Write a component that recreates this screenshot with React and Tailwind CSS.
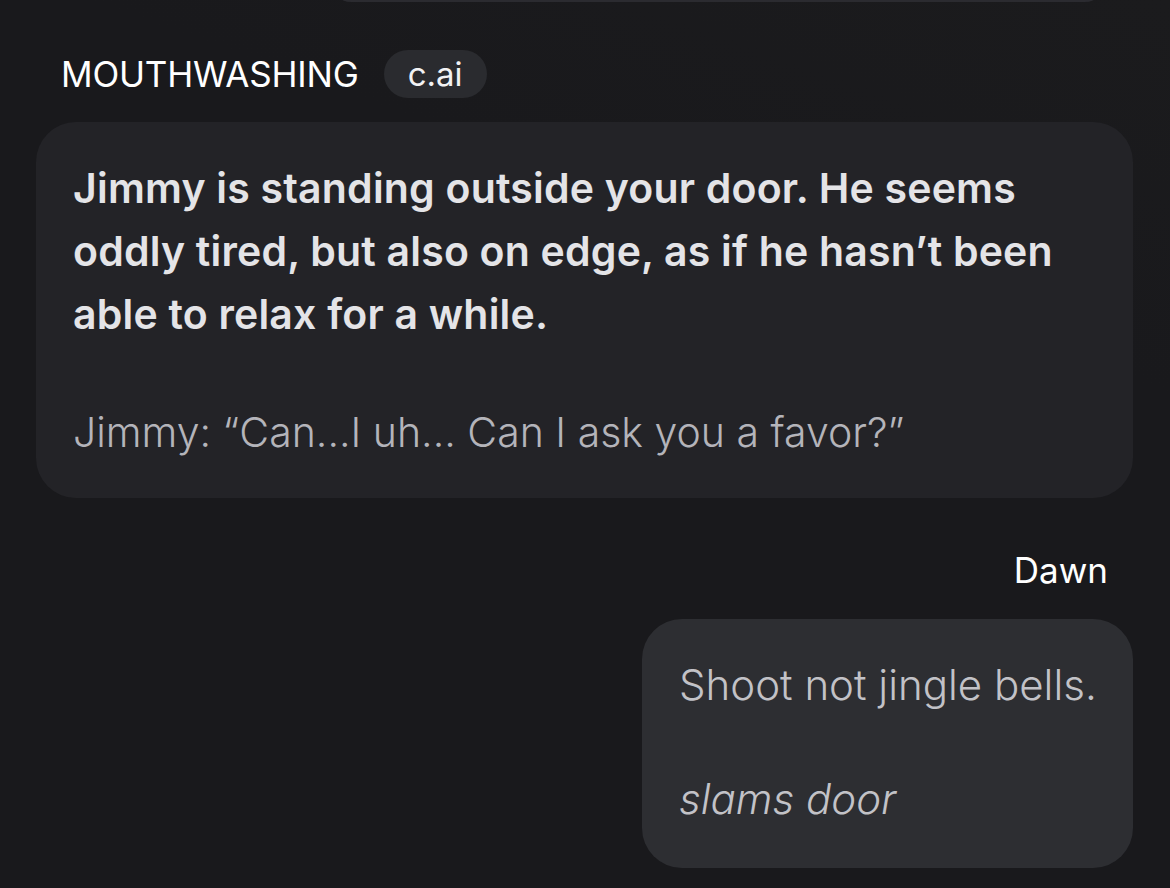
export default function App() {
  return (
    <div
      className="w-[1170px] h-[888px] overflow-hidden bg-[#19191c] text-white relative"
      style={{ fontFamily: 'Inter, "Noto Sans", sans-serif' }}
    >
      <div className="absolute inset-0 pointer-events-none bg-[linear-gradient(200deg,#1b1b1d_0%,#19191c_30%,#19191c_100%)]" />
      <div className="relative">
        {/* tail of previous bubble */}
        <div className="h-[2px] overflow-hidden">
          <div className="ml-[331px] mr-[65px] h-[40px] -mt-[38px] rounded-[40px] bg-[#2b2b30]" />
        </div>

        {/* character header */}
        <div className="flex items-center gap-[25px] pl-[61px] mt-[48px]">
          <span className="text-[35px] leading-none tracking-[-0.2px]">MOUTHWASHING</span>
          <span className="h-[48px] px-[24px] rounded-full bg-[#2a2b2f] text-[33px] leading-[48px] text-[#f2f2f4]">
            c.ai
          </span>
        </div>

        {/* character bubble */}
        <div className="ml-[36px] mr-[37px] mt-[24px] rounded-[40px] bg-[#232327] pl-[37px] pr-[20px] pt-[35px] pb-[34px]">
          <p className="text-[41px] leading-[63px] font-semibold text-[#e4e4e7] tracking-[0.2px]">
            <span className="block whitespace-nowrap">Jimmy is standing outside your door. He seems</span>
            <span className="block whitespace-nowrap">oddly tired, but also on edge, as if he hasn’t been</span>
            <span className="block whitespace-nowrap">able to relax for a while.</span>
          </p>
          <p className="mt-[55px] text-[41px] leading-[63px] font-light text-[#b4b4ba]">
            Jimmy: “Can...I uh... Can I ask you a favor?”
          </p>
        </div>

        {/* user name */}
        <div className="flex justify-end pr-[62px] mt-[48px]">
          <span className="text-[35px] leading-[48px]">Dawn</span>
        </div>

        {/* user bubble */}
        <div className="flex justify-end mr-[37px] mt-[25px]">
          <div className="w-[491px] rounded-[40px] bg-[#2d2e32] pl-[37px] pr-[20px] pt-[34px] pb-[38px]">
            <p className="text-[42px] leading-[63px] font-light text-[#c2c2c7]">
              Shoot not jingle bells.
            </p>
            <p className="mt-[51px] text-[42px] leading-[63px] font-light italic text-[#c2c2c7]">
              slams door
            </p>
          </div>
        </div>
      </div>
    </div>
  );
}
